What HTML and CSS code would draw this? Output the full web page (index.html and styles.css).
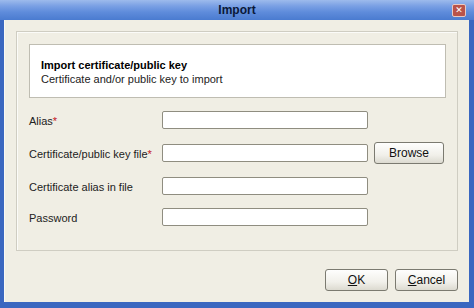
FILE: index.html
```html
<!DOCTYPE html>
<html>
<head>
<meta charset="utf-8">
<title>Import</title>
<link rel="stylesheet" href="styles.css">
</head>
<body>

<div class="win">
    <div class="tbar">
        <span class="tsp"></span>
        <span class="ttl">Import</span>
        <span class="tcl"><i class="cls">&#x2715;</i></span>
    </div>
    <div class="body">
        <div class="grp">
            <div class="hd">
                <h3>Import certificate/public key</h3>
                <p>Certificate and/or public key to import</p>
            </div>
            <div class="frm">
                <label>Alias<em>*</em></label>
                <span class="ipt"></span>
                <span></span>

                <label>Certificate/public key file<em>*</em></label>
                <span class="ipt"></span>
                <span class="btn bbr">Browse</span>

                <label>Certificate alias in file</label>
                <span class="ipt"></span>
                <span></span>

                <label>Password</label>
                <span class="ipt"></span>
                <span></span>
            </div>
        </div>
        <div class="acts">
            <span class="btn bok"><u>O</u>K</span>
            <span class="btn bok"><u>C</u>ancel</span>
        </div>
    </div>
</div>

</body>
</html>
```

FILE: styles.css
```css
*{box-sizing:border-box;}
body,h3,p{margin:0;padding:0;}
body{background:#3f6cc4;font:11px/14px "Liberation Sans",Arial,sans-serif;color:#000;}

.win{width:474px;height:308px;display:flex;flex-direction:column;background:#3a67c0;}
.tbar{height:20px;flex:none;display:grid;grid-template-columns:1fr auto 1fr;align-items:center;background:linear-gradient(#9dbbec 0,#7aa0e4 30%,#5f8cdb 60%,#4a7bd0 100%);}
.ttl{font-weight:bold;font-size:12px;color:#0a1838;}
.tcl{display:flex;justify-content:flex-end;padding-right:8px;}
.cls{display:block;width:14px;height:13px;margin-top:1px;background:#b9534a;border:1px solid #e9c9c2;border-radius:2px;color:#fff;font:bold 9px/11px "DejaVu Sans",sans-serif;text-align:center;font-style:normal;}

.body{flex:1;margin:0 5px 6px 4px;background:#f0eee4;border-left:1px solid #f8f8f4;padding:11px 11px 0 11px;}
.grp{height:220px;border:1px solid #cfcdc2;box-shadow:inset 1px 1px 0 #fbfbf8;padding:12px 11px 0 12px;}
.hd{height:54px;background:#fff;border:1px solid #bfbdb2;padding:0 11px;}
.hd h3{font-size:11px;padding-top:13px;line-height:14px;}
.hd p{line-height:14px;color:#222;}

.frm{display:grid;grid-template-columns:133px 206px 76px;row-gap:13px;align-items:center;margin-top:13px;}
.frm label{color:#222;padding-top:2px;}
.frm em{font-style:normal;color:#c4141c;}
.ipt{display:block;height:18px;background:#fff;border:1px solid #8f8d80;border-radius:2px;}

.btn{display:flex;align-items:center;justify-content:center;height:22px;border:1px solid #7b7a70;border-radius:3px;background:linear-gradient(#fefefd,#f1f0ea 60%,#dcdad0);color:#111;}
.bbr{width:70px;margin-left:6px;font-size:12px;}
.acts{display:flex;justify-content:flex-end;gap:7px;padding-top:18px;}
.bok{width:63px;font-size:12px;}
```
